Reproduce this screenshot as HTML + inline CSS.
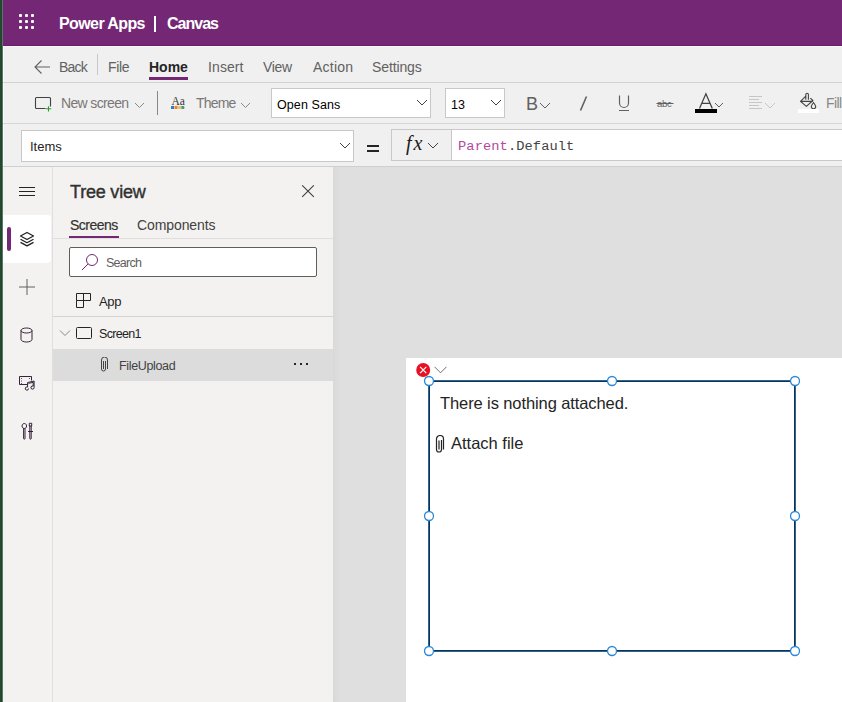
<!DOCTYPE html>
<html><head><meta charset="utf-8">
<style>
*{margin:0;padding:0;box-sizing:border-box}
html,body{width:842px;height:702px;overflow:hidden;background:#f0f0f0;font-family:"Liberation Sans",sans-serif;position:relative}
.a{position:absolute}
.t{position:absolute;white-space:nowrap;line-height:1}
.h{position:absolute;width:10px;height:10px;border-radius:50%;background:#fff;border:1.5px solid #2b88d8}
</style></head><body>
<!-- green strip -->
<div class="a" style="left:0;top:0;width:1px;height:702px;background:#244b32"></div>
<div class="a" style="left:1px;top:0;width:1px;height:702px;background:#1f442a"></div>
<div class="a" style="left:2px;top:0;width:1px;height:702px;background:#5d776a"></div>
<!-- header -->
<div class="a" style="left:3px;top:0;width:839px;height:46px;background:#742774"></div>
<div class="a" style="left:3px;top:45px;width:839px;height:1px;background:#6b1c6b"></div>
<div class="a" style="left:3px;top:46px;width:839px;height:1px;background:#f8f9f8"></div>
<div class="a" style="left:3px;top:46px;width:1px;height:656px;background:#fafafa"></div>

<!-- ribbon -->
<div class="a" style="left:3px;top:82px;width:839px;height:1px;background:#d3d3d3"></div>
<div class="a" style="left:3px;top:123px;width:839px;height:1px;background:#d6d6d6"></div>
<!-- formula row bottom line -->
<div class="a" style="left:3px;top:166px;width:839px;height:1px;background:#cfcfcf"></div>


<!-- waffle -->
<div class="a" style="left:19px;top:14px;width:3px;height:3px;border-radius:1px;background:#fff;box-shadow:6px 0 #fff,12px 0 #fff,0 6px #fff,6px 6px #fff,12px 6px #fff,0 12px #fff,6px 12px #fff,12px 12px #fff"></div>
<div class="t" id="t1" style="left:59px;top:15.5px;font-size:16px;letter-spacing:-0.6px;font-weight:bold;color:#fff">Power Apps</div>
<div class="a" style="left:154px;top:16px;width:2px;height:16px;background:#fff"></div>
<div class="t" id="t2" style="left:167px;top:15.5px;font-size:16px;letter-spacing:-1px;font-weight:bold;color:#fff">Canvas</div>

<!-- tab row -->
<svg class="a" style="left:33px;top:59px" width="18" height="16" viewBox="0 0 18 16"><path d="M17 8H2M8.5 1.5L2 8l6.5 6.5" fill="none" stroke="#616161" stroke-width="1.1"/></svg>
<div class="t" id="back" style="left:59px;top:60px;font-size:14px;letter-spacing:-0.8px;color:#616161">Back</div>
<div class="a" style="left:97px;top:54px;width:1px;height:21px;background:#c8c8c8"></div>
<div class="t" style="left:108px;top:60px;font-size:14px;letter-spacing:-0.35px;color:#616161">File</div>
<div class="t" id="home" style="left:149px;top:60px;font-size:14px;letter-spacing:0px;font-weight:bold;color:#242424">Home</div>
<div class="a" style="left:149px;top:77px;width:39px;height:3px;background:#742774"></div>
<div class="t" style="left:208px;top:60px;font-size:14px;letter-spacing:0.1px;color:#616161">Insert</div>
<div class="t" style="left:263px;top:60px;font-size:14px;letter-spacing:-0.35px;color:#616161">View</div>
<div class="t" style="left:313px;top:60px;font-size:14px;letter-spacing:0.25px;color:#616161">Action</div>
<div class="t" style="left:372px;top:60px;font-size:14px;letter-spacing:-0.12px;color:#616161">Settings</div>

<!-- toolbar row -->
<svg class="a" style="left:34px;top:96px" width="19" height="17" viewBox="0 0 19 17"><path d="M11.5 12.5H2.5a1 1 0 0 1-1-1v-9a1 1 0 0 1 1-1h13a1 1 0 0 1 1 1v8" fill="none" stroke="#424242" stroke-width="1.1"/><path d="M14.5 10.2v5.3M11.8 12.8h5.4" stroke="#2f9a2f" stroke-width="1.1"/></svg>
<div class="t" id="ns" style="left:61px;top:96px;font-size:14px;letter-spacing:-0.65px;color:#7a7776">New screen</div>
<svg class="a" style="left:134px;top:102px" width="11" height="7" viewBox="0 0 11 7"><path d="M1 1l4.5 4.5L10 1" fill="none" stroke="#8a8886" stroke-width="1"/></svg>
<div class="a" style="left:157px;top:91px;width:1px;height:24px;background:#8a8886"></div>
<svg class="a" style="left:170px;top:95px" width="16" height="16" viewBox="0 0 16 16"><text x="1.5" y="10" font-family="Liberation Serif" font-size="11.5" fill="#333">Aa</text><rect x="1" y="11" width="3" height="3" fill="#3a78c0"/><rect x="4.5" y="11" width="3" height="3" fill="#e8832a"/><rect x="8" y="11" width="3" height="3" fill="#e8c07a"/><rect x="11.3" y="11" width="3" height="3" fill="#4f9a70"/></svg>
<div class="t" id="th" style="left:196px;top:96px;font-size:14px;letter-spacing:-0.8px;color:#7a7776">Theme</div>
<svg class="a" style="left:240px;top:102px" width="11" height="7" viewBox="0 0 11 7"><path d="M1 1l4.5 4.5L10 1" fill="none" stroke="#8a8886" stroke-width="1"/></svg>
<div class="a" style="left:271px;top:88px;width:160px;height:30px;background:#fff;border:1px solid #c8c8c8"></div>
<div class="t" style="left:277px;top:99px;font-size:12.5px;letter-spacing:0.1px;color:#000">Open Sans</div>
<svg class="a" style="left:416px;top:99px" width="12" height="7" viewBox="0 0 12 7"><path d="M1 1l5 5 5-5" fill="none" stroke="#424242" stroke-width="1"/></svg>
<div class="a" style="left:445px;top:88px;width:60px;height:30px;background:#fff;border:1px solid #c8c8c8"></div>
<div class="t" style="left:451px;top:99px;font-size:12.5px;color:#000">13</div>
<svg class="a" style="left:490px;top:99px" width="12" height="7" viewBox="0 0 12 7"><path d="M1 1l5 5 5-5" fill="none" stroke="#424242" stroke-width="1"/></svg>
<div class="t" style="left:526px;top:95px;font-size:18px;color:#616161">B</div>
<svg class="a" style="left:539px;top:102px" width="12" height="7" viewBox="0 0 12 7"><path d="M1 1l5 5 5-5" fill="none" stroke="#616161" stroke-width="1"/></svg>
<svg class="a" style="left:578px;top:95px" width="11" height="17" viewBox="0 0 11 17"><path d="M8.5 1.5L2.5 15.5" stroke="#616161" stroke-width="1.6"/></svg>
<svg class="a" style="left:616px;top:94px" width="16" height="20" viewBox="0 0 16 20"><path d="M3.5 1.5v7.5a4.5 4.5 0 0 0 9 0V1.5" fill="none" stroke="#616161" stroke-width="1.2"/><path d="M3 16.5h10" stroke="#616161" stroke-width="1"/></svg>
<svg class="a" style="left:655px;top:97px" width="19" height="12" viewBox="0 0 19 12"><text x="2" y="9.5" font-family="Liberation Sans" font-size="9.5" letter-spacing="-0.3" fill="#616161">abc</text><path d="M1.5 6.5h17" stroke="#616161" stroke-width="1"/></svg>
<svg class="a" style="left:694px;top:92px" width="24" height="21" viewBox="0 0 24 21"><path d="M5.5 16.6L11.9 1.8l6.4 14.8M8.2 11.3h7.4" fill="none" stroke="#424242" stroke-width="1.25"/><rect x="1" y="17" width="22" height="4" fill="#000"/></svg>
<svg class="a" style="left:714px;top:102px" width="10" height="7" viewBox="0 0 10 7"><path d="M1 1l4 4 4-4" fill="none" stroke="#616161" stroke-width="1"/></svg>
<svg class="a" style="left:748px;top:95px" width="15" height="15" viewBox="0 0 15 15"><path d="M1 1.5h13M1 4.5h10M1 7.5h13M1 10.5h10M1 13.5h13" stroke="#c8c6c4" stroke-width="1"/></svg>
<svg class="a" style="left:764px;top:102px" width="12" height="7" viewBox="0 0 12 7"><path d="M1 1l5 5 5-5" fill="none" stroke="#c8c6c4" stroke-width="1"/></svg>
<svg class="a" style="left:798px;top:91px" width="22" height="23" viewBox="0 0 22 23"><path d="M2.5 10.4L7.8 5.2 M7.8 8.8V3.6a1.3 1.3 0 0 1 2.6 0V8.8 M12.3 7.1l2.6 2.4L8.4 15.4 2.5 10.4h12.4" fill="none" stroke="#424242" stroke-width="1.1" stroke-linejoin="round"/><path d="M15.5 11.6c-1.4 1.9-2.2 2.9-2.2 3.9a2.2 2.2 0 0 0 4.4 0c0-1-.8-2-2.2-3.9z" fill="none" stroke="#424242" stroke-width="1.1"/><rect x="-1" y="18" width="22" height="4" fill="#fff"/></svg>
<div class="t" style="left:826px;top:96px;font-size:14px;letter-spacing:-0.6px;color:#8a8886">Fill</div>

<!-- formula row -->
<div class="a" style="left:21px;top:130px;width:333px;height:32px;background:#fff;border:1px solid #c8c8c8"></div>
<div class="t" id="items" style="left:30px;top:140px;font-size:13px;color:#242424">Items</div>
<svg class="a" style="left:339px;top:142px" width="12" height="7" viewBox="0 0 12 7"><path d="M1 1l5 5 5-5" fill="none" stroke="#424242" stroke-width="1"/></svg>
<div class="a" style="left:367px;top:145px;width:12px;height:2px;background:#242424"></div>
<div class="a" style="left:367px;top:150px;width:12px;height:2px;background:#242424"></div>
<div class="a" style="left:391px;top:129px;width:61px;height:32px;background:#f0f0f0;border:1px solid #c8c8c8"></div>
<div class="t" id="fx" style="left:406px;top:133px;font-size:20px;letter-spacing:2px;font-family:'Liberation Serif',serif;font-style:italic;color:#1b1b1b">fx</div>
<svg class="a" style="left:427px;top:142px" width="12" height="7" viewBox="0 0 12 7"><path d="M1 1l5 5 5-5" fill="none" stroke="#424242" stroke-width="1"/></svg>
<div class="a" style="left:451px;top:129px;width:391px;height:32px;background:#fff;border:1px solid #c8c8c8;border-right:none"></div>
<div class="t" id="formula" style="left:458px;top:139.5px;font-size:13.7px;letter-spacing:0.1px;font-family:'Liberation Mono',monospace;color:#444"><span style="color:#b5489c">Parent</span>.Default</div>

<!-- left rail -->
<div class="a" style="left:3px;top:167px;width:49px;height:535px;background:#f3f2f1"></div>
<div class="a" style="left:52px;top:167px;width:1px;height:535px;background:#e1dfdd"></div>
<!-- tree panel -->
<div class="a" style="left:53px;top:167px;width:280px;height:535px;background:#f3f2f1"></div>
<!-- canvas -->
<div class="a" style="left:333px;top:167px;width:509px;height:535px;background:#dfdfdf"></div>
<div class="a" style="left:406px;top:358px;width:436px;height:344px;background:#fff"></div>


<!-- rail icons -->
<div class="a" style="left:19px;top:187px;width:16px;height:1px;background:#242424;box-shadow:0 4px #242424,0 8px #242424"></div>
<div class="a" style="left:3px;top:215px;width:48px;height:48px;background:#fff;border-radius:0 4px 4px 0"></div>
<div class="a" style="left:7px;top:227px;width:4px;height:24px;background:#742774;border-radius:2px"></div>
<svg class="a" style="left:19px;top:231px" width="16" height="16" viewBox="0 0 16 16"><path d="M8 1.5L14.5 5 8 8.5 1.5 5z M1.5 8.2L8 11.7 14.5 8.2 M1.5 11.4L8 14.9 14.5 11.4" fill="none" stroke="#1f1f1f" stroke-width="1.25" stroke-linejoin="round"/></svg>
<svg class="a" style="left:19px;top:279px" width="16" height="16" viewBox="0 0 16 16"><path d="M8 0v16M0 8h16" stroke="#616161" stroke-width="1"/></svg>
<svg class="a" style="left:20px;top:327px" width="14" height="16" viewBox="0 0 14 16"><ellipse cx="6.5" cy="3.5" rx="5.5" ry="2.5" fill="none" stroke="#2a1830" stroke-width="0.95"/><path d="M1 3.5v9c0 1.4 2.5 2.5 5.5 2.5s5.5-1.1 5.5-2.5v-9" fill="none" stroke="#2a1830" stroke-width="0.95"/></svg>
<svg class="a" style="left:18px;top:375px" width="19" height="16" viewBox="0 0 19 16"><path d="M1.5 1.5h12v4M1.5 1.5v8h8" fill="none" stroke="#2a1830" stroke-width="0.95"/><path d="M3.5 3v1M3.5 5.5v1M3.5 8v1M11.5 3v1" stroke="#3a2440" stroke-width="0.8"/><path d="M10.5 13.5a1.6 1.6 0 1 1-0.9-1.4V7.5l6.5-1.5v6.5a1.6 1.6 0 1 1-0.9-1.4V7.3l-4.7 1.1" fill="none" stroke="#2a1830" stroke-width="0.95"/></svg>
<svg class="a" style="left:21px;top:422px" width="13" height="18" viewBox="0 0 13 18"><path d="M3.3 6.5a2.3 2.5 0 1 1 0.01 0z M2.6 6.3v10.2a0.7 0.7 0 0 0 1.4 0V6.3" fill="none" stroke="#2a1830" stroke-width="0.95"/><path d="M8.8 4v12.5a0.7 0.7 0 0 0 1.4 0V4 M8.3 1.3h2.4v2.7h-2.4z M7 9.5h5" fill="none" stroke="#2a1830" stroke-width="0.95"/></svg>

<!-- tree panel content -->
<div class="t" id="tv" style="left:70px;top:183px;font-size:18px;letter-spacing:-0.2px;-webkit-text-stroke:0.4px #323130;color:#323130">Tree view</div>
<svg class="a" style="left:300px;top:184px" width="16" height="16" viewBox="0 0 16 16"><path d="M2.2 1.3l11.6 11.6M13.8 1.3L2.2 12.9" stroke="#3b3b3b" stroke-width="1.05"/></svg>
<div class="t" id="scr" style="left:70px;top:218px;font-size:14px;letter-spacing:-0.5px;-webkit-text-stroke:0.2px #323130;color:#323130">Screens</div>
<div class="t" id="comp" style="left:137px;top:218px;font-size:14px;letter-spacing:-0.1px;color:#424242">Components</div>
<div class="a" style="left:69px;top:236px;width:50px;height:2px;background:#742774"></div>
<div class="a" style="left:53px;top:238px;width:280px;height:1px;background:#e1dfdd"></div>
<div class="a" style="left:69px;top:247px;width:248px;height:30px;background:#fff;border:1px solid #605e5c;border-radius:2px"></div>
<svg class="a" style="left:81px;top:253px" width="18" height="18" viewBox="0 0 18 18"><circle cx="11" cy="7" r="5.5" fill="none" stroke="#742774" stroke-width="1"/><path d="M7.1 10.9L1 17" stroke="#742774" stroke-width="1"/></svg>
<div class="t" id="srch" style="left:106px;top:257px;font-size:12.5px;letter-spacing:-0.75px;color:#605e5c">Search</div>

<svg class="a" style="left:75px;top:292px" width="17" height="17" viewBox="0 0 17 17"><path d="M1.5 1.5h14v7h-14zM1.5 8.5v7h7v-14" fill="none" stroke="#242424" stroke-width="1"/></svg>
<div class="t" id="app" style="left:99px;top:295px;font-size:13px;letter-spacing:-0.3px;color:#242424">App</div>
<div class="a" style="left:53px;top:316px;width:280px;height:1px;background:#d6d4d2"></div>
<svg class="a" style="left:59px;top:329px" width="12" height="8" viewBox="0 0 12 8"><path d="M1 1.5l5 5 5-5" fill="none" stroke="#8a8886" stroke-width="1"/></svg>
<svg class="a" style="left:76px;top:327px" width="17" height="13" viewBox="0 0 17 13"><rect x="0.5" y="0.5" width="15" height="11" rx="1" fill="none" stroke="#242424" stroke-width="1"/></svg>
<div class="t" id="s1" style="left:99px;top:328px;font-size:12.5px;letter-spacing:-0.7px;color:#242424">Screen1</div>
<div class="a" style="left:53px;top:349px;width:280px;height:32px;background:#dcdcdc"></div>
<svg class="a" style="left:99px;top:357px" width="9" height="16" viewBox="0 0 9 16"><path d="M6.5 4v8a2 2 0 0 1-4 0V3a3 3 0 0 1 6 0v9" fill="none" stroke="#424242" stroke-width="1"/><path d="M4.5 4v8" stroke="#424242" stroke-width="1"/></svg>
<div class="t" id="fu" style="left:119px;top:360px;font-size:12.5px;letter-spacing:-0.35px;color:#424242">FileUpload</div>
<div class="a" style="left:294px;top:363px;width:2px;height:2px;background:#242424;box-shadow:6px 0 #242424,12px 0 #242424"></div>


<!-- canvas shadow -->
<div class="a" style="left:333px;top:167px;width:8px;height:535px;background:linear-gradient(to right,#d9d9d9,#dfdfdf)"></div>
<!-- control -->
<div class="a" style="left:428px;top:380px;width:368px;height:272px;border:1px solid #0f6cbd"></div>
<div class="a" style="left:429px;top:381px;width:366px;height:270px;border:1px solid #2b2b2b"></div>
<div class="t" id="nothing" style="left:440px;top:395px;font-size:16.5px;letter-spacing:-0.1px;color:#242424">There is nothing attached.</div>
<svg class="a" style="left:433px;top:435px" width="13" height="20" viewBox="0 0 13 20"><path d="M8.5 5v9.5a2.5 2.5 0 0 1-5 0V4a3.5 3.5 0 0 1 7 0v10.5" fill="none" stroke="#242424" stroke-width="1.2"/><path d="M6 5.5v9" stroke="#242424" stroke-width="1.2"/></svg>
<div class="t" id="attach" style="left:451px;top:435px;font-size:16.5px;color:#242424">Attach file</div>
<!-- red error -->
<svg class="a" style="left:416px;top:363px" width="15" height="15" viewBox="0 0 15 15"><circle cx="7.2" cy="7" r="7" fill="#e81123"/><path d="M4.1 3.9l6.2 6.2M10.3 3.9l-6.2 6.2" stroke="#fff" stroke-width="1.2"/></svg>
<svg class="a" style="left:434px;top:366px" width="13" height="8" viewBox="0 0 13 8"><path d="M0.5 0.8l6 6 6-6" fill="none" stroke="#707070" stroke-width="1"/></svg>
<!-- handles -->
<svg class="a" style="left:423px;top:375px" width="12" height="12" viewBox="0 0 12 12"><circle cx="6" cy="6" r="4.5" fill="#fff" stroke="#2b88d8" stroke-width="1.3"/></svg>
<svg class="a" style="left:606px;top:375px" width="12" height="12" viewBox="0 0 12 12"><circle cx="6" cy="6" r="4.5" fill="#fff" stroke="#2b88d8" stroke-width="1.3"/></svg>
<svg class="a" style="left:789px;top:375px" width="12" height="12" viewBox="0 0 12 12"><circle cx="6" cy="6" r="4.5" fill="#fff" stroke="#2b88d8" stroke-width="1.3"/></svg>
<svg class="a" style="left:423px;top:510px" width="12" height="12" viewBox="0 0 12 12"><circle cx="6" cy="6" r="4.5" fill="#fff" stroke="#2b88d8" stroke-width="1.3"/></svg>
<svg class="a" style="left:789px;top:510px" width="12" height="12" viewBox="0 0 12 12"><circle cx="6" cy="6" r="4.5" fill="#fff" stroke="#2b88d8" stroke-width="1.3"/></svg>
<svg class="a" style="left:423px;top:645px" width="12" height="12" viewBox="0 0 12 12"><circle cx="6" cy="6" r="4.5" fill="#fff" stroke="#2b88d8" stroke-width="1.3"/></svg>
<svg class="a" style="left:606px;top:645px" width="12" height="12" viewBox="0 0 12 12"><circle cx="6" cy="6" r="4.5" fill="#fff" stroke="#2b88d8" stroke-width="1.3"/></svg>
<svg class="a" style="left:789px;top:645px" width="12" height="12" viewBox="0 0 12 12"><circle cx="6" cy="6" r="4.5" fill="#fff" stroke="#2b88d8" stroke-width="1.3"/></svg>

</body></html>
